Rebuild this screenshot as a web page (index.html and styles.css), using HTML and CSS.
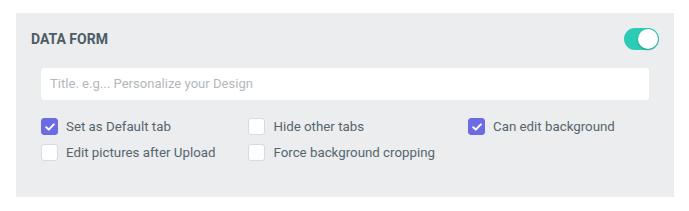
FILE: index.html
```html
<!DOCTYPE html>
<html>
<head>
<meta charset="utf-8">
<link rel="stylesheet" href="styles.css">
</head>
<body>
<div class="panel">
  <div class="header">
    <div class="title">DATA FORM</div>
    <div class="toggle on"><span class="knob"></span></div>
  </div>
  <div class="input">Title. e.g... Personalize your Design</div>
  <div class="options">
    <label class="opt"><span class="box checked"><svg viewBox="0 0 10 8" width="10" height="8"><path d="M1.2 4.2 L3.8 6.6 L8.8 1.4" fill="none" stroke="#fff" stroke-width="2" stroke-linecap="round" stroke-linejoin="round"/></svg></span>Set as Default tab</label>
    <label class="opt"><span class="box"></span>Hide other tabs</label>
    <label class="opt"><span class="box checked"><svg viewBox="0 0 10 8" width="10" height="8"><path d="M1.2 4.2 L3.8 6.6 L8.8 1.4" fill="none" stroke="#fff" stroke-width="2" stroke-linecap="round" stroke-linejoin="round"/></svg></span>Can edit background</label>
    <label class="opt"><span class="box"></span>Edit pictures after Upload</label>
    <label class="opt"><span class="box"></span>Force background cropping</label>
  </div>
</div>
</body>
</html>
```
FILE: styles.css
```css
html, body { margin: 0; padding: 0; background: #fff; }
body { padding: 13px 15px 14px 16px; font-family: Roboto, "Liberation Sans", sans-serif; }
.panel {
  width: 658px;
  height: 184px;
  box-sizing: border-box;
  background: #ebedef;
  padding: 15px 15px 0 15px;
}
.header {
  display: flex;
  justify-content: space-between;
  align-items: center;
  height: 22px;
}
.title {
  font-size: 14px;
  font-weight: 700;
  color: #4d5c64;
}
.toggle {
  width: 35px;
  height: 22px;
  border-radius: 11px;
  background: #2ccbb4;
  position: relative;
}
.knob {
  position: absolute;
  top: 1px;
  right: 1px;
  width: 20px;
  height: 20px;
  border-radius: 50%;
  background: #fff;
  box-shadow: 0 1px 2px rgba(0,0,0,0.25);
}
.input {
  margin: 18px 10px 0 10px;
  height: 32px;
  background: #fff;
  border-radius: 3px;
  font-size: 13.1px;
  color: #b3b8bc;
  line-height: 32px;
  padding-left: 9px;
}
.options {
  display: grid;
  grid-template-columns: auto auto auto;
  justify-content: start;
  column-gap: 33px;
  row-gap: 9px;
  margin: 18px 10px 0 10px;
}
.opt {
  display: flex;
  align-items: center;
  font-size: 13.3px;
  color: #56656d;
  height: 17px;
  white-space: nowrap;
}
.box {
  width: 17px;
  height: 17px;
  box-sizing: border-box;
  border: 1px solid #d6dbde;
  border-radius: 3px;
  background: #fff;
  margin-right: 8px;
  display: flex;
  align-items: center;
  justify-content: center;
  flex: none;
}
.box.checked {
  background: #6c6be3;
  border-color: #6c6be3;
}
```
